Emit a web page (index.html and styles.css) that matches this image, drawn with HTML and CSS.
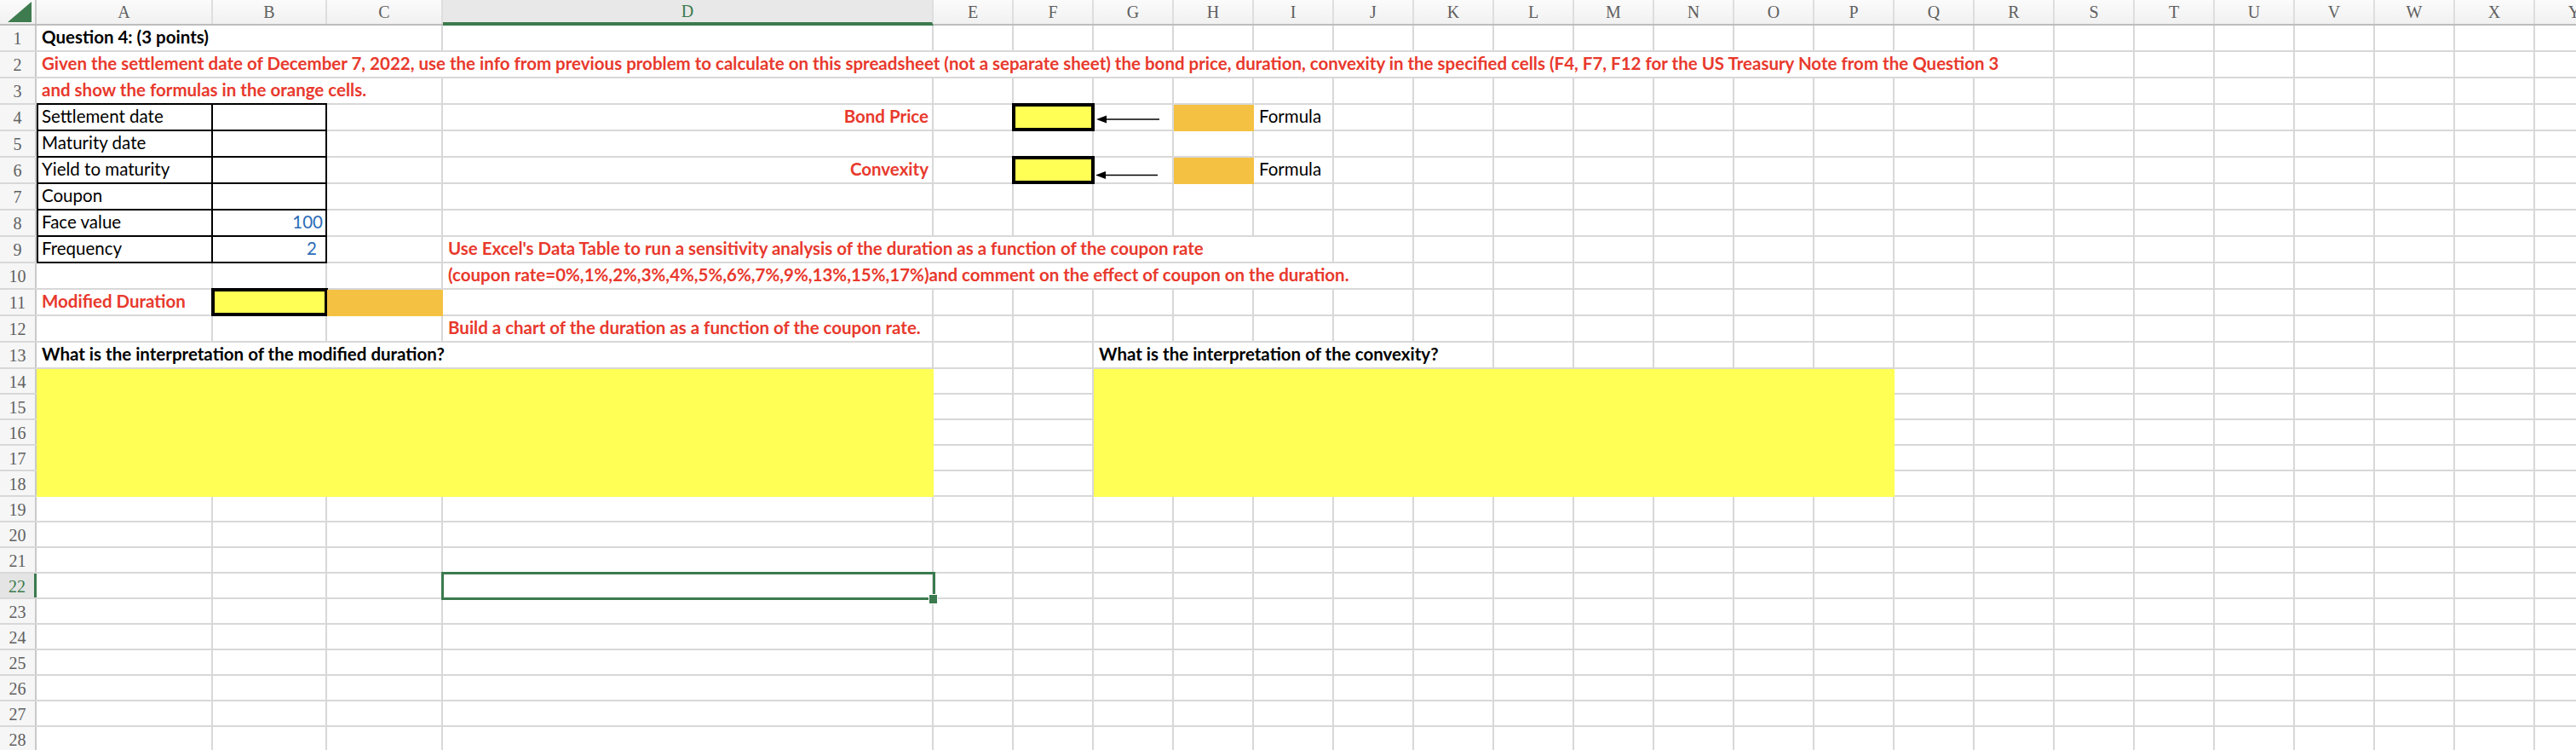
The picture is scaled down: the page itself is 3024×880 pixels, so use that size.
FILE: index.html
```html
<!DOCTYPE html>
<html lang="en">
<head>
<meta charset="utf-8">
<title>Question 4 - Bond price, duration, convexity</title>
<link rel="stylesheet" href="styles.css">
</head>
<body>
<div class="sheet">
  <div class="hdr">
    <div class="corner"><svg class="tri" viewBox="0 0 41 28" width="41" height="28"><polygon points="37,2 37,26 9,26" fill="#3e7b4f"/></svg></div>
    <div class="colh">A</div>
    <div class="colh">B</div>
    <div class="colh">C</div>
    <div class="colh sel">D</div>
    <div class="colh">E</div>
    <div class="colh">F</div>
    <div class="colh">G</div>
    <div class="colh">H</div>
    <div class="colh">I</div>
    <div class="colh">J</div>
    <div class="colh">K</div>
    <div class="colh">L</div>
    <div class="colh">M</div>
    <div class="colh">N</div>
    <div class="colh">O</div>
    <div class="colh">P</div>
    <div class="colh">Q</div>
    <div class="colh">R</div>
    <div class="colh">S</div>
    <div class="colh">T</div>
    <div class="colh">U</div>
    <div class="colh">V</div>
    <div class="colh">W</div>
    <div class="colh">X</div>
    <div class="colh">Y</div>
  </div>

  <div class="row">
    <div class="rh">1</div>
    <div class="cell a-c cover edge bold">Question 4: (3 points)</div>
  </div>
  <div class="row">
    <div class="rh">2</div>
    <div class="cell a-r cover edge red">Given the settlement date of December 7, 2022, use the info from previous problem to calculate on this spreadsheet (not a separate sheet) the bond price, duration, convexity in the specified cells (F4, F7, F12 for the US Treasury Note from the Question 3</div>
  </div>
  <div class="row">
    <div class="rh">3</div>
    <div class="cell a-c cover edge red">and show the formulas in the orange cells.</div>
  </div>
  <div class="row">
    <div class="rh">4</div>
    <div class="cell at-a tb tbl tbt">Settlement date</div>
    <div class="cell at-b tb tbt"></div>
    <div class="cell at-d red right">Bond Price</div>
    <div class="cell at-f thick"></div>
    <div class="cell at-g arrow-cell">
      <svg class="arrow" viewBox="0 0 94 29" width="94" height="29"><line x1="13" y1="17" x2="77" y2="17" stroke="#000" stroke-width="1.6"/><polygon points="3,17 15,12.5 15,21.5" fill="#000"/></svg>
    </div>
    <div class="cell at-h org"></div>
    <div class="cell at-i">Formula</div>
  </div>
  <div class="row">
    <div class="rh">5</div>
    <div class="cell at-a tb tbl">Maturity date</div>
    <div class="cell at-b tb"></div>
  </div>
  <div class="row">
    <div class="rh">6</div>
    <div class="cell at-a tb tbl">Yield to maturity</div>
    <div class="cell at-b tb"></div>
    <div class="cell at-d red right">Convexity</div>
    <div class="cell at-f thick"></div>
    <div class="cell at-g arrow-cell">
      <svg class="arrow" viewBox="0 0 94 29" width="94" height="29"><line x1="12" y1="20.5" x2="75" y2="20.5" stroke="#000" stroke-width="1.6"/><polygon points="2,20.5 14,16 14,25" fill="#000"/></svg>
    </div>
    <div class="cell at-h org"></div>
    <div class="cell at-i">Formula</div>
  </div>
  <div class="row">
    <div class="rh">7</div>
    <div class="cell at-a tb tbl">Coupon</div>
    <div class="cell at-b tb"></div>
  </div>
  <div class="row">
    <div class="rh">8</div>
    <div class="cell at-a tb tbl">Face value</div>
    <div class="cell at-b tb num">100</div>
  </div>
  <div class="row">
    <div class="rh">9</div>
    <div class="cell at-a tb tbl">Frequency</div>
    <div class="cell at-b tb num num-pad">2</div>
    <div class="cell d-i cover edge red">Use Excel's Data Table to run a sensitivity analysis of the duration as a function of the coupon rate</div>
  </div>
  <div class="row">
    <div class="rh">10</div>
    <div class="cell d-j cover edge red">(coupon rate=0%,1%,2%,3%,4%,5%,6%,7%,9%,13%,15%,17%)and comment on the effect of coupon on the duration.</div>
  </div>
  <div class="row">
    <div class="rh">11</div>
    <div class="cell at-a red">Modified Duration</div>
    <div class="cell at-b thick"></div>
    <div class="cell at-c org"></div>
  </div>
  <div class="row">
    <div class="rh">12</div>
    <div class="cell at-d red">Build a chart of the duration as a function of the coupon rate.</div>
  </div>
  <div class="row">
    <div class="rh">13</div>
    <div class="cell a-d cover edge bold">What is the interpretation of the modified duration?</div>
    <div class="cell g-k cover edge bold">What is the interpretation of the convexity?</div>
  </div>
  <div class="row s">
    <div class="rh">14</div>
    <div class="cell a-d fill-y"></div>
    <div class="cell g-p fill-y"></div>
  </div>
  <div class="row s">
    <div class="rh">15</div>
    <div class="cell a-d fill-y"></div>
    <div class="cell g-p fill-y"></div>
  </div>
  <div class="row s">
    <div class="rh">16</div>
    <div class="cell a-d fill-y"></div>
    <div class="cell g-p fill-y"></div>
  </div>
  <div class="row s">
    <div class="rh">17</div>
    <div class="cell a-d fill-y"></div>
    <div class="cell g-p fill-y"></div>
  </div>
  <div class="row s">
    <div class="rh">18</div>
    <div class="cell a-d fill-y"></div>
    <div class="cell g-p fill-y"></div>
  </div>
  <div class="row s"><div class="rh">19</div></div>
  <div class="row s"><div class="rh">20</div></div>
  <div class="row s"><div class="rh">21</div></div>
  <div class="row s">
    <div class="rh sel">22</div>
    <div class="cell at-d active"></div>
  </div>
  <div class="row s"><div class="rh">23</div></div>
  <div class="row s"><div class="rh">24</div></div>
  <div class="row s"><div class="rh">25</div></div>
  <div class="row s"><div class="rh">26</div></div>
  <div class="row s"><div class="rh">27</div></div>
  <div class="row s"><div class="rh">28</div></div>
</div>
</body>
</html>
```

FILE: styles.css
```css
:root {
  --grid: #d8d8d8;
  --red: #e8392d;
  --green: #3b7a4e;
  --yellow: #ffff55;
  --orange: #f4c142;
  --blue: #2c6cb8;
}

* { box-sizing: border-box; }

html, body {
  margin: 0;
  padding: 0;
  background: #fff;
}

body {
  width: 3024px;
  height: 880px;
  overflow: hidden;
}

.sheet {
  width: 3070px;
  font-family: "Lato", "Liberation Sans", sans-serif;
  font-size: 20.5px;
  color: #000;
}

.hdr,
.row {
  display: grid;
  grid-template-columns: 43px 207px 134px 136px 576px repeat(21, 94px);
}

/* column header */
.hdr {
  height: 30px;
  border-bottom: 2px solid #bdbdbd;
  background: linear-gradient(#fbfbfb, #f1f1f1);
  font-family: "Liberation Serif", "DejaVu Serif", serif;
  font-size: 20px;
  color: #606060;
}

.corner {
  border-right: 2px solid #c9c9c9;
}

.tri { display: block; }

.colh {
  display: flex;
  align-items: center;
  justify-content: center;
  border-right: 2px solid #dedede;
  padding-top: 1px;
}

.colh.sel {
  color: var(--green);
  background: #e8e8e8;
  border-bottom: 4px solid var(--green);
  margin-bottom: -2px;
}

/* rows */
.row {
  height: 31px;
  border-bottom: 2px solid var(--grid);
  background:
    linear-gradient(var(--grid), var(--grid)) 248px 0 / 2px 100% no-repeat,
    linear-gradient(var(--grid), var(--grid)) 382px 0 / 2px 100% no-repeat,
    linear-gradient(var(--grid), var(--grid)) 518px 0 / 2px 100% no-repeat,
    repeating-linear-gradient(to right, transparent 0 92px, var(--grid) 92px 94px) 1002px 0 / 2068px 100% no-repeat,
    #fff;
}

.row.s { height: 30px; }

.rh {
  grid-column: 1;
  display: flex;
  align-items: center;
  justify-content: center;
  background: #f6f6f6;
  border-right: 2px solid #c9c9c9;
  font-family: "Liberation Serif", "DejaVu Serif", serif;
  font-size: 20px;
  color: #606060;
  padding-top: 2px;
}

.rh.sel {
  background: #e4e4e4;
  color: var(--green);
  border-right: 3px solid var(--green);
}

/* cells */
.cell {
  display: flex;
  align-items: flex-end;
  padding: 0 6px 4px;
  line-height: 24px;
  white-space: nowrap;
}

.at-a { grid-column: 2; }
.at-b { grid-column: 3; }
.at-c { grid-column: 4; }
.at-d { grid-column: 5; }
.at-f { grid-column: 7; }
.at-g { grid-column: 8; }
.at-h { grid-column: 9; }
.at-i { grid-column: 10; }

.a-c { grid-column: 2 / 5; }
.a-d { grid-column: 2 / 6; }
.a-r { grid-column: 2 / 20; }
.d-i { grid-column: 5 / 11; }
.d-j { grid-column: 5 / 12; }
.g-k { grid-column: 8 / 13; }
.g-p { grid-column: 8 / 18; }

.cover { background: #fff; }
.edge { border-right: 2px solid var(--grid); }

.bold { font-weight: 700; }
.red { color: var(--red); font-weight: 700; }
.right { justify-content: flex-end; }

.num {
  color: var(--blue);
  justify-content: flex-end;
  padding-right: 3px;
}
.num-pad { padding-right: 10px; }

/* bordered input table A4:B9 */
.tb {
  background: #fff;
  border-right: 2px solid #000;
  border-bottom: 2px solid #000;
  margin-bottom: -2px;
}
.tbl {
  border-left: 2px solid #000;
  padding-left: 4px;
}
.tbt {
  border-top: 2px solid #000;
  margin-top: -2px;
}

/* fills */
.fill-y {
  background: var(--yellow);
  margin-bottom: -2px;
}
.org {
  background: var(--orange);
  margin-bottom: -2px;
}
.thick {
  background: var(--yellow);
  border: 4px solid #000;
  margin: -2px -1px -2px -2px;
}

.arrow-cell {
  padding: 0;
  align-items: stretch;
}
.arrow { display: block; }

/* active cell D22 */
.active {
  position: relative;
}
.active::before {
  content: "";
  position: absolute;
  left: -2px;
  right: -2px;
  top: -2px;
  bottom: -3px;
  border: 3px solid var(--green);
}
.active::after {
  content: "";
  position: absolute;
  right: -5px;
  bottom: -8px;
  width: 9px;
  height: 10px;
  background: var(--green);
  border: 1px solid #fff;
}
```
